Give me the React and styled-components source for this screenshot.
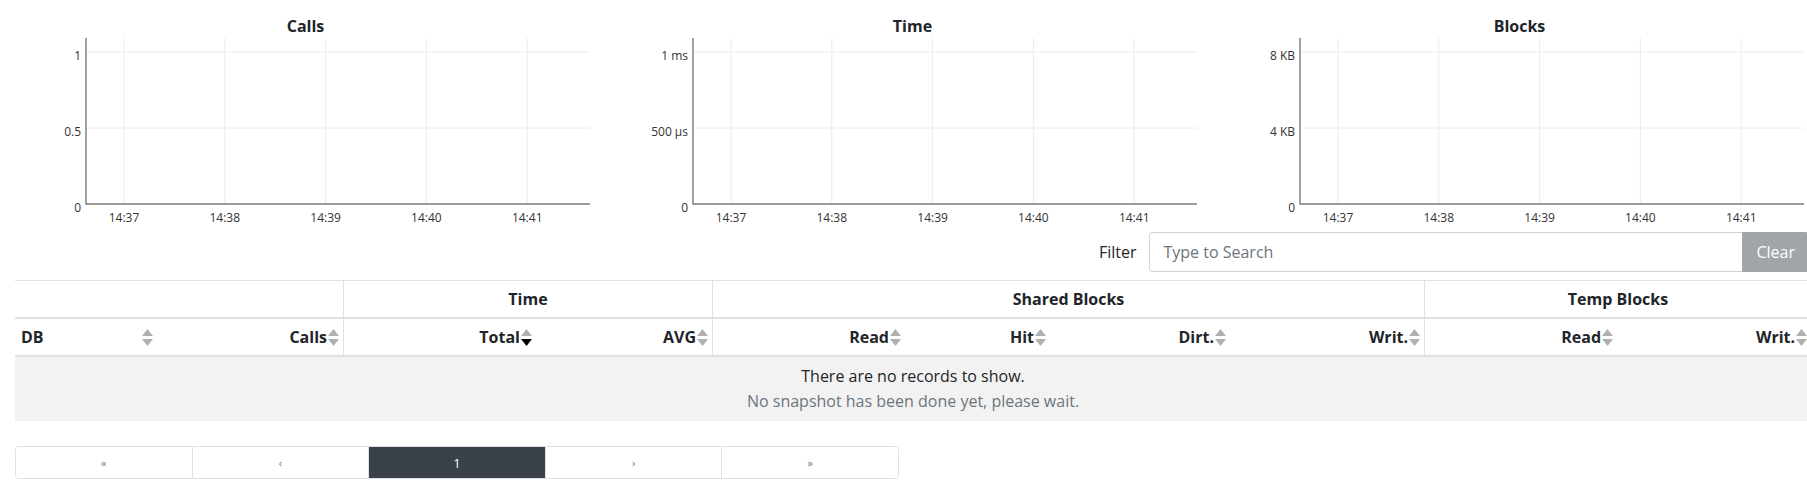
import React from 'react'
import styled, { createGlobalStyle } from 'styled-components'

const GlobalStyle = createGlobalStyle`
  body {
    margin: 0;
    overflow: hidden;
    background: #ffffff;
    font-family: 'Open Sans', 'Noto Sans', sans-serif;
    color: #212529;
  }
`

const Page = styled.div`
  width: 1822px;
`

const ChartsRow = styled.div`
  display: grid;
  grid-template-columns: repeat(3, 607px);
  margin-left: 2px;
`

const ChartBox = styled.div`
  display: flex;
  flex-direction: column;
`

const ChartTitle = styled.div`
  padding-top: 14px;
  font-size: 16px;
  line-height: 24px;
  font-weight: 700;
  text-align: center;
  color: #212529;
`

const Content = styled.div`
  margin-left: 15px;
  width: 1796px;
`

const FilterRow = styled.div`
  display: flex;
  justify-content: flex-end;
  align-items: center;
  height: 40px;
  padding-right: 2px;
`

const FilterLabel = styled.label`
  font-size: 16px;
  margin-right: 13px;
  color: #212529;
`

const SearchInput = styled.input`
  box-sizing: border-box;
  width: 593px;
  height: 40px;
  border: 1px solid #ced4da;
  border-right: none;
  border-radius: 4px 0 0 4px;
  padding: 0 13px;
  font-family: inherit;
  font-size: 16px;
  color: #212529;
  outline: none;
  &::placeholder {
    color: #6c757d;
  }
`

const ClearButton = styled.button`
  height: 40px;
  padding: 0 14px;
  border: none;
  border-radius: 0 4px 4px 0;
  background: #a0a5aa;
  color: #ffffff;
  font-family: inherit;
  font-size: 16px;
`

const Table = styled.table`
  margin-top: 8px;
  width: 1796px;
  table-layout: fixed;
  border-collapse: separate;
  border-spacing: 0;
`

const GroupCell = styled.th`
  height: 36px;
  padding: 0;
  border-top: 1px solid #dee2e6;
  border-bottom: 2px solid #dee2e6;
  border-left: ${p => (p.$divider ? '1px solid #dee2e6' : 'none')};
  font-size: 16px;
  font-weight: 700;
  text-align: center;
`

const HeadCell = styled.th`
  height: 36px;
  padding: 0 4px 0 6px;
  border-bottom: 2px solid #dee2e6;
  border-left: ${p => (p.$divider ? '1px solid #dee2e6' : 'none')};
  font-size: 16px;
  font-weight: 700;
`

const HeadInner = styled.div`
  display: flex;
  align-items: center;
  justify-content: ${p => (p.$left ? 'space-between' : 'flex-end')};
  gap: 1px;
`

const EmptyCell = styled.td`
  padding: 7px 0;
  background: #f2f2f2;
  text-align: center;
  font-size: 16px;
  line-height: 25px;
`

const EmptyNote = styled.div`
  color: ${p => (p.$muted ? '#6c757d' : '#212529')};
`

const Pagination = styled.div`
  display: flex;
  margin-top: 25px;
  width: 884px;
  height: 33px;
  box-sizing: border-box;
  border: 1px solid #dee2e6;
  border-radius: 4px;
  overflow: hidden;
`

const PageButton = styled.div`
  flex: 1;
  display: flex;
  align-items: center;
  justify-content: center;
  border-left: ${p => (p.$first ? 'none' : '1px solid #dee2e6')};
  background: ${p => (p.$active ? '#3b4149' : '#ffffff')};
  color: ${p => (p.$active ? '#ffffff' : '#6c757d')};
  font-size: ${p => (p.$active ? '13px' : '11px')};
`

const SortIcon = ({ dir }) => (
  <svg width="11" height="17" viewBox="0 0 11 17">
    <polygon points="0,7 5.5,0 11,7" fill={dir === 'asc' ? '#000' : '#b0b0b0'} />
    <polygon points="0,10 11,10 5.5,17" fill={dir === 'desc' ? '#000' : '#b0b0b0'} />
  </svg>
)

const PLOT_LEFT = 84
const PLOT_RIGHT = 588
const BASE = 166
const times = ['14:37', '14:38', '14:39', '14:40', '14:41']

const Chart = ({ title, ticks }) => (
  <ChartBox>
    <ChartTitle>{title}</ChartTitle>
    <svg width="607" height="194" viewBox="0 0 607 194" fontFamily="'Open Sans', 'Noto Sans', sans-serif" fontSize="12">
      {times.map((t, i) => {
        const x = PLOT_LEFT + 38 + i * 100.8
        return <line key={t} x1={x} x2={x} y1={0} y2={BASE} stroke="#ececec" strokeWidth="1" />
      })}
      {[14, 90].map(y => (
        <line key={y} x1={PLOT_LEFT} x2={PLOT_RIGHT} y1={y} y2={y} stroke="#ececec" strokeWidth="1" />
      ))}
      <line x1={PLOT_LEFT} x2={PLOT_LEFT} y1={0} y2={BASE + 0.7} stroke="#7a7a7a" strokeWidth="1.4" />
      <line x1={PLOT_LEFT} x2={PLOT_RIGHT} y1={BASE} y2={BASE} stroke="#7a7a7a" strokeWidth="1.4" />
      {ticks.map((t, i) => (
        <text key={t} x={PLOT_LEFT - 5} y={[14, 90, 166][i] + 8} textAnchor="end" fill="#333">{t}</text>
      ))}
      {times.map((t, i) => (
        <text key={t} x={PLOT_LEFT + 38 + i * 100.8} y={184} textAnchor="middle" fill="#333">{t}</text>
      ))}
    </svg>
  </ChartBox>
)

const columns = [
  { label: 'DB', left: true },
  { label: 'Calls' },
  { label: 'Total', dir: 'desc', divider: true },
  { label: 'AVG' },
  { label: 'Read', divider: true },
  { label: 'Hit' },
  { label: 'Dirt.' },
  { label: 'Writ.' },
  { label: 'Read', divider: true },
  { label: 'Writ.' },
]

const widths = [142, 186, 193, 176, 193, 145, 180, 194, 193, 194]

const App = () => {
  return (
    <Page>
      <GlobalStyle />
      <ChartsRow>
        <Chart title="Calls" ticks={['1', '0.5', '0']} />
        <Chart title="Time" ticks={['1 ms', '500 µs', '0']} />
        <Chart title="Blocks" ticks={['8 KB', '4 KB', '0']} />
      </ChartsRow>
      <Content>
        <FilterRow>
          <FilterLabel>Filter</FilterLabel>
          <SearchInput placeholder="Type to Search" />
          <ClearButton>Clear</ClearButton>
        </FilterRow>
        <Table>
          <colgroup>
            {widths.map((w, i) => <col key={i} style={{ width: w }} />)}
          </colgroup>
          <thead>
            <tr>
              <GroupCell colSpan={2}></GroupCell>
              <GroupCell colSpan={2} $divider>Time</GroupCell>
              <GroupCell colSpan={4} $divider>Shared Blocks</GroupCell>
              <GroupCell colSpan={2} $divider>Temp Blocks</GroupCell>
            </tr>
            <tr>
              {columns.map((c, i) => (
                <HeadCell key={i} $divider={c.divider}>
                  <HeadInner $left={c.left}>
                    <span>{c.label}</span>
                    <SortIcon dir={c.dir} />
                  </HeadInner>
                </HeadCell>
              ))}
            </tr>
          </thead>
          <tbody>
            <tr>
              <EmptyCell colSpan={10}>
                <EmptyNote>There are no records to show.</EmptyNote>
                <EmptyNote $muted>No snapshot has been done yet, please wait.</EmptyNote>
              </EmptyCell>
            </tr>
          </tbody>
        </Table>
        <Pagination>
          <PageButton $first>«</PageButton>
          <PageButton>‹</PageButton>
          <PageButton $active>1</PageButton>
          <PageButton>›</PageButton>
          <PageButton>»</PageButton>
        </Pagination>
      </Content>
    </Page>
  )
}

export default App
